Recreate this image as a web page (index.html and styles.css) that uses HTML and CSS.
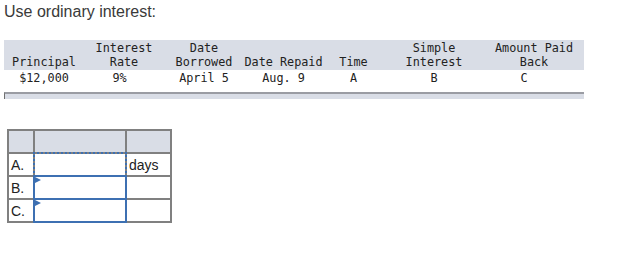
FILE: index.html
```html
<!DOCTYPE html>
<html>
<head>
<meta charset="utf-8">
<link rel="stylesheet" href="styles.css">
</head>
<body>
<div class="page">
  <p class="title">Use ordinary interest:</p>
  <div class="grid-wrap">
    <table class="data">
      <colgroup>
        <col class="c1"><col class="c2"><col class="c3"><col class="c4"><col class="c5"><col class="c6"><col class="c7">
      </colgroup>
      <thead>
        <tr>
          <th>Principal</th>
          <th>Interest<br>Rate</th>
          <th>Date<br>Borrowed</th>
          <th>Date Repaid</th>
          <th>Time</th>
          <th>Simple<br>Interest</th>
          <th>Amount Paid<br>Back</th>
        </tr>
      </thead>
      <tbody>
        <tr>
          <td>$12,000</td>
          <td class="shift-rate">9%</td>
          <td>April 5</td>
          <td>Aug. 9</td>
          <td>A</td>
          <td>B</td>
          <td class="shift-c">C</td>
        </tr>
      </tbody>
    </table>
    <div class="track"></div>
  </div>

  <table class="answers">
    <tr class="head">
      <td class="lab"></td><td class="inp"></td><td class="unit"></td>
    </tr>
    <tr>
      <td class="lab">A.</td>
      <td class="inp"><span class="box focus"></span></td>
      <td class="unit">days</td>
    </tr>
    <tr>
      <td class="lab">B.</td>
      <td class="inp"><span class="box"><span class="flag"></span></span></td>
      <td class="unit"></td>
    </tr>
    <tr>
      <td class="lab">C.</td>
      <td class="inp"><span class="box"><span class="flag"></span></span></td>
      <td class="unit"></td>
    </tr>
  </table>
</div>
</body>
</html>
```

FILE: styles.css
```css
html, body {
  margin: 0;
  padding: 0;
  background: #ffffff;
}

.page {
  padding: 2px 0 0 4px;
}

.title {
  margin: 0 0 18px 0;
  font-family: "Liberation Sans", Arial, sans-serif;
  font-size: 16px;
  line-height: 20px;
  color: #3a3a3a;
}

.grid-wrap {
  width: 580px;
  overflow: hidden;
}

.data {
  border-collapse: collapse;
  border-spacing: 0;
  table-layout: fixed;
  width: 580px;
  font-family: "DejaVu Sans Mono", monospace;
  font-size: 11.8px;
  color: #222222;
}

.c1 { width: 80px; }
.c2 { width: 80px; }
.c3 { width: 80px; }
.c4 { width: 79px; }
.c5 { width: 61px; }
.c6 { width: 100px; }
.c7 { width: 100px; }

.data th {
  background: #d9dde6;
  font-weight: normal;
  text-align: center;
  vertical-align: bottom;
  padding: 1px 0;
  line-height: 14px;
  white-space: nowrap;
}

.data td {
  text-align: center;
  padding: 1px 0 7px 0;
  line-height: 14px;
  white-space: nowrap;
}

.data td.shift-rate { padding-right: 9px; }
.data td.shift-c { padding-right: 20px; }

.track {
  height: 5px;
  background: #d9dde6;
  border-top: 2px solid #9a9ca3;
  border-left: 1px solid #6e6e6e;
}

.answers {
  margin: 30px 0 0 3px;
  border-collapse: separate;
  border-spacing: 0;
  border-top: 2px solid #808080;
  border-left: 2px solid #808080;
  font-family: "Liberation Sans", Arial, sans-serif;
  font-size: 14px;
  color: #222222;
}

.answers td {
  height: 21px;
  padding: 0;
  border-right: 2px solid #808080;
  border-bottom: 2px solid #808080;
  vertical-align: middle;
  line-height: 16px;
}

.answers .head td {
  background: #d9dde6;
}

.answers td.lab {
  width: 22px;
  padding-left: 2px;
}

.answers td.inp {
  width: 90px;
  position: relative;
}

.answers td.unit {
  width: 41px;
  padding-left: 2px;
}

.box {
  position: absolute;
  top: -2px;
  left: -2px;
  right: -2px;
  bottom: -2px;
  box-sizing: border-box;
  border: 2px solid #3d70b2;
  background: #ffffff;
}

.box.focus {
  border-style: dotted;
  background: transparent;
}

.flag {
  position: absolute;
  top: 0;
  left: 0;
  width: 0;
  height: 0;
  border-top: 3px solid transparent;
  border-bottom: 3px solid transparent;
  border-left: 6px solid #3d70b2;
}
```
